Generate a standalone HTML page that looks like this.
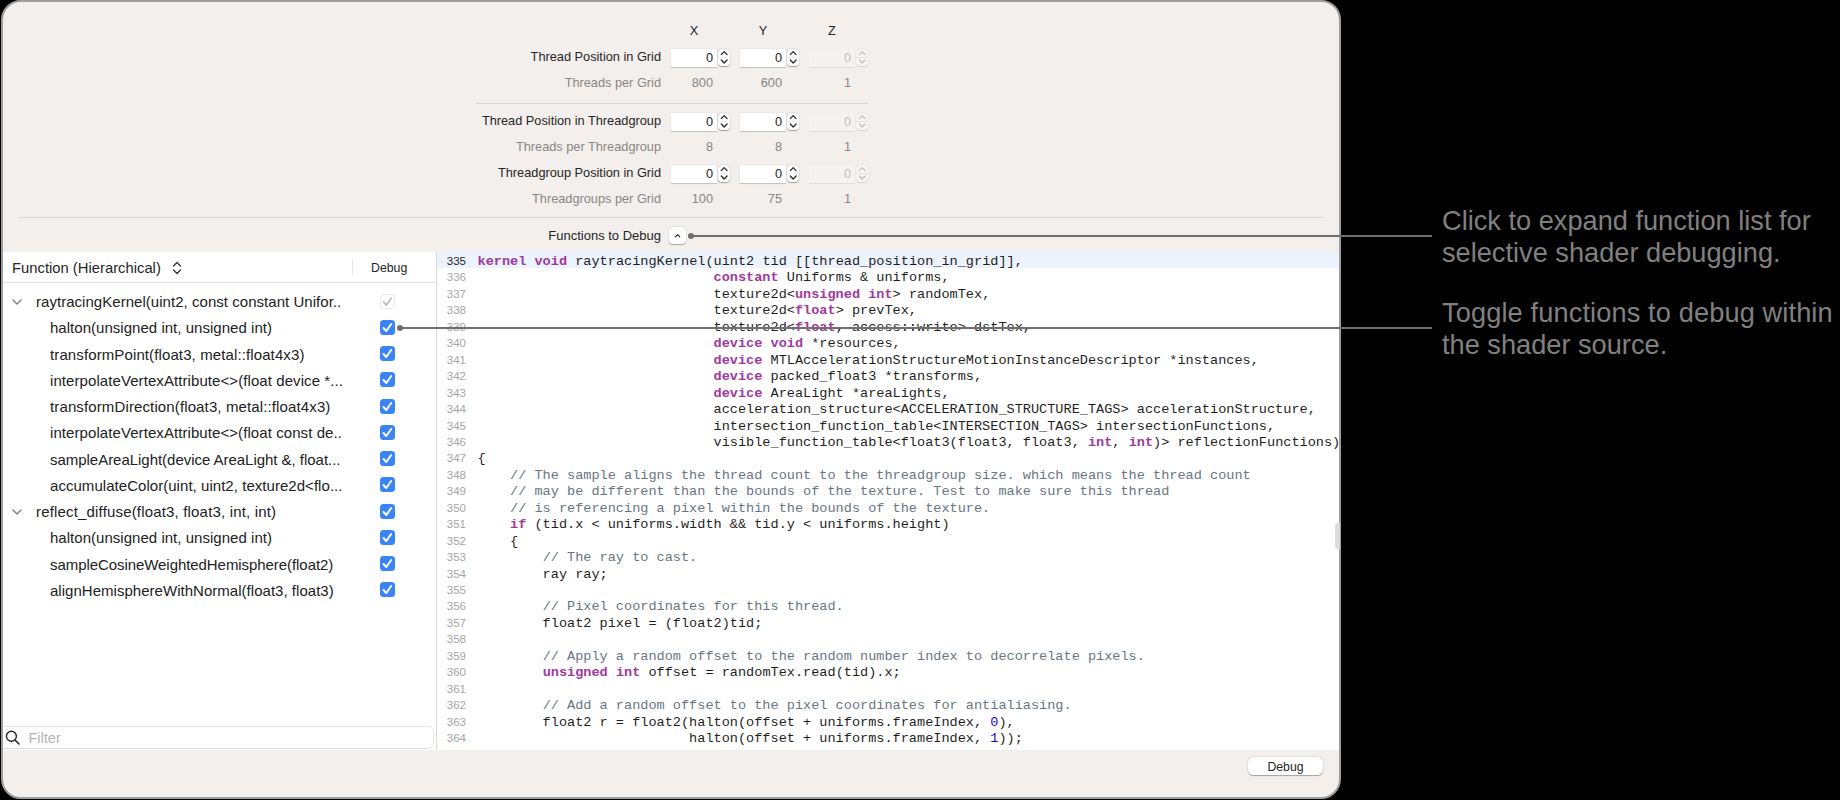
<!DOCTYPE html>
<html><head><meta charset="utf-8"><style>
html,body{margin:0;padding:0;}
body{width:1840px;height:800px;background:#000;position:relative;overflow:hidden;font-family:"Liberation Sans", sans-serif;}
.abs{position:absolute;}
.win{position:absolute;left:1px;top:0px;width:1340px;height:799px;box-sizing:border-box;border:2px solid #9d9d9d;border-radius:20px;background:#f3efec;}
.lbl{position:absolute;font-size:12.75px;color:#262626;white-space:nowrap;text-align:right;line-height:16px;}
.sub{color:#8a8684;}
.fld{position:absolute;width:46px;height:18px;background:#fff;box-shadow:0 0.6px 0.6px rgba(0,0,0,0.16),0 0 0 0.5px rgba(0,0,0,0.05);}
.fld span{position:absolute;right:4px;top:1px;font-size:12.75px;line-height:16px;color:#262626;}
.fld.dis{background:#f5f2f0;box-shadow:0 0.5px 0.5px rgba(0,0,0,0.08);}
.fld.dis span{color:#c4c0bd;}
.stp{position:absolute;width:12px;height:17px;background:#fff;border-radius:4px;box-shadow:0 0.5px 1px rgba(0,0,0,0.3),0 0 0 0.5px rgba(0,0,0,0.08);}
.stp.dis{background:#f7f4f2;box-shadow:0 0.5px 1px rgba(0,0,0,0.1),0 0 0 0.5px rgba(0,0,0,0.05);}
.val{position:absolute;font-size:12.75px;line-height:16px;color:#8a8684;text-align:right;width:60px;}
.row{position:absolute;font-size:15px;color:#222;white-space:nowrap;line-height:18px;}
.cb{position:absolute;left:380px;width:15px;height:15px;border-radius:3.5px;background:#3a84f6;}
.code{position:absolute;left:437px;font-family:"Liberation Mono", monospace;font-size:13.57px;white-space:pre;color:#1f1f1f;line-height:16.45px;height:16.45px;width:902px;}
.ln{position:absolute;left:0;top:-1px;width:29px;text-align:right;font-family:"Liberation Sans", sans-serif;font-size:11.5px;color:#a6a6a6;}
.ct{position:absolute;left:40.5px;}
.k{color:#a03a9e;font-weight:bold;}
.c{color:#687684;}
.n{color:#1c00cf;}
.ann{position:absolute;left:1442px;font-size:27.2px;line-height:32px;color:#808080;white-space:nowrap;}
</style></head><body>
<div class="win"></div>

<div class="abs" style="left:674px;top:23px;width:40px;text-align:center;font-size:12.75px;line-height:16px;color:#262626;">X</div>
<div class="abs" style="left:743px;top:23px;width:40px;text-align:center;font-size:12.75px;line-height:16px;color:#262626;">Y</div>
<div class="abs" style="left:812px;top:23px;width:40px;text-align:center;font-size:12.75px;line-height:16px;color:#262626;">Z</div>
<div class="lbl" style="right:1179px;top:49px;">Thread Position in Grid</div>
<div class="fld" style="left:671px;top:49px;"><span>0</span></div>
<div class="stp" style="left:718px;top:49px;"><svg width="12" height="17" style="position:absolute;left:0;top:0"><path d="M3.3 5.6 L6.2 2.6 L9.1 5.6 M3.3 11.0 L6.2 14.0 L9.1 11.0" stroke="#262626" stroke-width="1.25" fill="none" stroke-linecap="round" stroke-linejoin="round"/><line x1="0" y1="8.4" x2="12" y2="8.4" stroke="rgba(0,0,0,0.08)" stroke-width="1"/></svg></div>
<div class="fld" style="left:740px;top:49px;"><span>0</span></div>
<div class="stp" style="left:787px;top:49px;"><svg width="12" height="17" style="position:absolute;left:0;top:0"><path d="M3.3 5.6 L6.2 2.6 L9.1 5.6 M3.3 11.0 L6.2 14.0 L9.1 11.0" stroke="#262626" stroke-width="1.25" fill="none" stroke-linecap="round" stroke-linejoin="round"/><line x1="0" y1="8.4" x2="12" y2="8.4" stroke="rgba(0,0,0,0.08)" stroke-width="1"/></svg></div>
<div class="fld dis" style="left:809px;top:49px;"><span>0</span></div>
<div class="stp dis" style="left:856px;top:49px;"><svg width="12" height="17" style="position:absolute;left:0;top:0"><path d="M3.3 5.6 L6.2 2.6 L9.1 5.6 M3.3 11.0 L6.2 14.0 L9.1 11.0" stroke="#c4c0bd" stroke-width="1.25" fill="none" stroke-linecap="round" stroke-linejoin="round"/><line x1="0" y1="8.4" x2="12" y2="8.4" stroke="rgba(0,0,0,0.08)" stroke-width="1"/></svg></div>
<div class="lbl sub" style="right:1179px;top:75px;">Threads per Grid</div>
<div class="val" style="left:653px;top:75px;">800</div>
<div class="val" style="left:722px;top:75px;">600</div>
<div class="val" style="left:791px;top:75px;">1</div>
<div class="lbl" style="right:1179px;top:113px;">Thread Position in Threadgroup</div>
<div class="fld" style="left:671px;top:113px;"><span>0</span></div>
<div class="stp" style="left:718px;top:113px;"><svg width="12" height="17" style="position:absolute;left:0;top:0"><path d="M3.3 5.6 L6.2 2.6 L9.1 5.6 M3.3 11.0 L6.2 14.0 L9.1 11.0" stroke="#262626" stroke-width="1.25" fill="none" stroke-linecap="round" stroke-linejoin="round"/><line x1="0" y1="8.4" x2="12" y2="8.4" stroke="rgba(0,0,0,0.08)" stroke-width="1"/></svg></div>
<div class="fld" style="left:740px;top:113px;"><span>0</span></div>
<div class="stp" style="left:787px;top:113px;"><svg width="12" height="17" style="position:absolute;left:0;top:0"><path d="M3.3 5.6 L6.2 2.6 L9.1 5.6 M3.3 11.0 L6.2 14.0 L9.1 11.0" stroke="#262626" stroke-width="1.25" fill="none" stroke-linecap="round" stroke-linejoin="round"/><line x1="0" y1="8.4" x2="12" y2="8.4" stroke="rgba(0,0,0,0.08)" stroke-width="1"/></svg></div>
<div class="fld dis" style="left:809px;top:113px;"><span>0</span></div>
<div class="stp dis" style="left:856px;top:113px;"><svg width="12" height="17" style="position:absolute;left:0;top:0"><path d="M3.3 5.6 L6.2 2.6 L9.1 5.6 M3.3 11.0 L6.2 14.0 L9.1 11.0" stroke="#c4c0bd" stroke-width="1.25" fill="none" stroke-linecap="round" stroke-linejoin="round"/><line x1="0" y1="8.4" x2="12" y2="8.4" stroke="rgba(0,0,0,0.08)" stroke-width="1"/></svg></div>
<div class="lbl sub" style="right:1179px;top:139px;">Threads per Threadgroup</div>
<div class="val" style="left:653px;top:139px;">8</div>
<div class="val" style="left:722px;top:139px;">8</div>
<div class="val" style="left:791px;top:139px;">1</div>
<div class="lbl" style="right:1179px;top:165px;">Threadgroup Position in Grid</div>
<div class="fld" style="left:671px;top:165px;"><span>0</span></div>
<div class="stp" style="left:718px;top:165px;"><svg width="12" height="17" style="position:absolute;left:0;top:0"><path d="M3.3 5.6 L6.2 2.6 L9.1 5.6 M3.3 11.0 L6.2 14.0 L9.1 11.0" stroke="#262626" stroke-width="1.25" fill="none" stroke-linecap="round" stroke-linejoin="round"/><line x1="0" y1="8.4" x2="12" y2="8.4" stroke="rgba(0,0,0,0.08)" stroke-width="1"/></svg></div>
<div class="fld" style="left:740px;top:165px;"><span>0</span></div>
<div class="stp" style="left:787px;top:165px;"><svg width="12" height="17" style="position:absolute;left:0;top:0"><path d="M3.3 5.6 L6.2 2.6 L9.1 5.6 M3.3 11.0 L6.2 14.0 L9.1 11.0" stroke="#262626" stroke-width="1.25" fill="none" stroke-linecap="round" stroke-linejoin="round"/><line x1="0" y1="8.4" x2="12" y2="8.4" stroke="rgba(0,0,0,0.08)" stroke-width="1"/></svg></div>
<div class="fld dis" style="left:809px;top:165px;"><span>0</span></div>
<div class="stp dis" style="left:856px;top:165px;"><svg width="12" height="17" style="position:absolute;left:0;top:0"><path d="M3.3 5.6 L6.2 2.6 L9.1 5.6 M3.3 11.0 L6.2 14.0 L9.1 11.0" stroke="#c4c0bd" stroke-width="1.25" fill="none" stroke-linecap="round" stroke-linejoin="round"/><line x1="0" y1="8.4" x2="12" y2="8.4" stroke="rgba(0,0,0,0.08)" stroke-width="1"/></svg></div>
<div class="lbl sub" style="right:1179px;top:191px;">Threadgroups per Grid</div>
<div class="val" style="left:653px;top:191px;">100</div>
<div class="val" style="left:722px;top:191px;">75</div>
<div class="val" style="left:791px;top:191px;">1</div>
<div class="abs" style="left:476px;top:103px;width:392px;height:1px;background:#dcd7d4;"></div>
<div class="abs" style="left:19px;top:217px;width:1304px;height:1px;background:#dcd7d4;"></div>
<div class="lbl" style="right:1179px;top:228px;font-size:13px;">Functions to Debug</div>
<div class="abs" style="left:669px;top:227px;width:17px;height:17px;background:#fff;border-radius:4px;box-shadow:0 0.5px 1px rgba(0,0,0,0.3),0 0 0 0.5px rgba(0,0,0,0.06);"><svg width="17" height="17" style="position:absolute;left:0;top:0"><path d="M6.4 9.9 L8.6 7.6 L10.8 9.9" stroke="#222" stroke-width="1.2" fill="none" stroke-linecap="round" stroke-linejoin="round"/></svg></div>
<div class="abs" style="left:3px;top:252px;width:433px;height:498px;background:#fff;"></div>
<div class="abs" style="left:436px;top:252px;width:1px;height:498px;background:#ddd7d5;"></div>
<div class="abs" style="left:12px;top:258px;font-size:14.8px;line-height:20px;color:#262626;white-space:nowrap;">Function (Hierarchical)</div>
<svg class="abs" style="left:170px;top:258.5px" width="14" height="18"><path d="M3.5 7 L7 3.5 L10.5 7 M3.5 11 L7 14.5 L10.5 11" stroke="#333" stroke-width="1.3" fill="none" stroke-linecap="round" stroke-linejoin="round"/></svg>
<div class="abs" style="left:352px;top:259px;width:1px;height:16px;background:#e4e4e4;"></div>
<div class="abs" style="left:371px;top:260px;font-size:12.3px;line-height:16px;color:#262626;">Debug</div>
<div class="abs" style="left:3px;top:282px;width:433px;height:1px;background:#e2e2e2;"></div>
<div class="row" style="left:36px;top:293.00px;letter-spacing:0.038px;">raytracingKernel(uint2, const constant Unifor..</div>
<svg class="abs" style="left:11px;top:298.00px" width="12" height="8"><path d="M2 2 L6 6 L10 2" stroke="#7a7a7a" stroke-width="1.3" fill="none" stroke-linecap="round" stroke-linejoin="round"/></svg>
<div class="abs" style="left:380px;top:293.50px;width:15px;height:15px;box-sizing:border-box;border-radius:3.5px;background:#fff;border:1px solid #e6e6e6;"><svg width="13" height="13" style="position:absolute;left:0;top:0"><path d="M2.6 7.0 L5.4 10.0 L10.2 3.3" stroke="#bdbdbd" stroke-width="1.9" fill="none" stroke-linecap="round" stroke-linejoin="round"/></svg></div>
<div class="row" style="left:50px;top:319.25px;letter-spacing:0.029px;">halton(unsigned int, unsigned int)</div>
<div class="cb" style="top:319.75px;"><svg width="15" height="15" style="position:absolute;left:0;top:0"><path d="M3.5 8.0 L6.3 11.0 L11.2 4.0" stroke="#fff" stroke-width="2.0" fill="none" stroke-linecap="round" stroke-linejoin="round"/></svg></div>
<div class="row" style="left:50px;top:345.50px;letter-spacing:0.113px;">transformPoint(float3, metal::float4x3)</div>
<div class="cb" style="top:346.00px;"><svg width="15" height="15" style="position:absolute;left:0;top:0"><path d="M3.5 8.0 L6.3 11.0 L11.2 4.0" stroke="#fff" stroke-width="2.0" fill="none" stroke-linecap="round" stroke-linejoin="round"/></svg></div>
<div class="row" style="left:50px;top:371.75px;letter-spacing:0.079px;">interpolateVertexAttribute&lt;&gt;(float device *...</div>
<div class="cb" style="top:372.25px;"><svg width="15" height="15" style="position:absolute;left:0;top:0"><path d="M3.5 8.0 L6.3 11.0 L11.2 4.0" stroke="#fff" stroke-width="2.0" fill="none" stroke-linecap="round" stroke-linejoin="round"/></svg></div>
<div class="row" style="left:50px;top:398.00px;letter-spacing:0.125px;">transformDirection(float3, metal::float4x3)</div>
<div class="cb" style="top:398.50px;"><svg width="15" height="15" style="position:absolute;left:0;top:0"><path d="M3.5 8.0 L6.3 11.0 L11.2 4.0" stroke="#fff" stroke-width="2.0" fill="none" stroke-linecap="round" stroke-linejoin="round"/></svg></div>
<div class="row" style="left:50px;top:424.25px;letter-spacing:0.077px;">interpolateVertexAttribute&lt;&gt;(float const de..</div>
<div class="cb" style="top:424.75px;"><svg width="15" height="15" style="position:absolute;left:0;top:0"><path d="M3.5 8.0 L6.3 11.0 L11.2 4.0" stroke="#fff" stroke-width="2.0" fill="none" stroke-linecap="round" stroke-linejoin="round"/></svg></div>
<div class="row" style="left:50px;top:450.50px;letter-spacing:-0.031px;">sampleAreaLight(device AreaLight &amp;, float...</div>
<div class="cb" style="top:451.00px;"><svg width="15" height="15" style="position:absolute;left:0;top:0"><path d="M3.5 8.0 L6.3 11.0 L11.2 4.0" stroke="#fff" stroke-width="2.0" fill="none" stroke-linecap="round" stroke-linejoin="round"/></svg></div>
<div class="row" style="left:50px;top:476.75px;letter-spacing:0.043px;">accumulateColor(uint, uint2, texture2d&lt;flo...</div>
<div class="cb" style="top:477.25px;"><svg width="15" height="15" style="position:absolute;left:0;top:0"><path d="M3.5 8.0 L6.3 11.0 L11.2 4.0" stroke="#fff" stroke-width="2.0" fill="none" stroke-linecap="round" stroke-linejoin="round"/></svg></div>
<div class="row" style="left:36px;top:503.00px;letter-spacing:0.172px;">reflect_diffuse(float3, float3, int, int)</div>
<svg class="abs" style="left:11px;top:508.00px" width="12" height="8"><path d="M2 2 L6 6 L10 2" stroke="#7a7a7a" stroke-width="1.3" fill="none" stroke-linecap="round" stroke-linejoin="round"/></svg>
<div class="cb" style="top:503.50px;"><svg width="15" height="15" style="position:absolute;left:0;top:0"><path d="M3.5 8.0 L6.3 11.0 L11.2 4.0" stroke="#fff" stroke-width="2.0" fill="none" stroke-linecap="round" stroke-linejoin="round"/></svg></div>
<div class="row" style="left:50px;top:529.25px;letter-spacing:0.029px;">halton(unsigned int, unsigned int)</div>
<div class="cb" style="top:529.75px;"><svg width="15" height="15" style="position:absolute;left:0;top:0"><path d="M3.5 8.0 L6.3 11.0 L11.2 4.0" stroke="#fff" stroke-width="2.0" fill="none" stroke-linecap="round" stroke-linejoin="round"/></svg></div>
<div class="row" style="left:50px;top:555.50px;letter-spacing:-0.065px;">sampleCosineWeightedHemisphere(float2)</div>
<div class="cb" style="top:556.00px;"><svg width="15" height="15" style="position:absolute;left:0;top:0"><path d="M3.5 8.0 L6.3 11.0 L11.2 4.0" stroke="#fff" stroke-width="2.0" fill="none" stroke-linecap="round" stroke-linejoin="round"/></svg></div>
<div class="row" style="left:50px;top:581.75px;letter-spacing:0.027px;">alignHemisphereWithNormal(float3, float3)</div>
<div class="cb" style="top:582.25px;"><svg width="15" height="15" style="position:absolute;left:0;top:0"><path d="M3.5 8.0 L6.3 11.0 L11.2 4.0" stroke="#fff" stroke-width="2.0" fill="none" stroke-linecap="round" stroke-linejoin="round"/></svg></div>
<div class="abs" style="left:3px;top:726px;width:431px;height:23px;box-sizing:border-box;border-top:1px solid #e3e6e8;border-bottom:1px solid #dde1e3;border-right:1px solid #e8e8e8;border-radius:0 6px 6px 0;background:#fff;"></div>
<svg class="abs" style="left:4px;top:729px" width="18" height="18"><circle cx="7.4" cy="7.3" r="5" stroke="#262626" stroke-width="1.4" fill="none"/><path d="M11 11 L15 15" stroke="#262626" stroke-width="1.6" stroke-linecap="round"/></svg>
<div class="abs" style="left:28.5px;top:729px;font-size:14.5px;line-height:18px;color:#b3b3b3;">Filter</div>
<div class="abs" style="left:437px;top:252px;width:902px;height:498px;background:#fff;"></div>
<div class="abs" style="left:437px;top:252px;width:902px;height:16px;background:#ecf3fd;"></div>
<div class="abs" style="left:437px;top:252px;width:902px;height:498px;overflow:hidden;">
<div class="code" style="left:0;top:2.00px;"><span class="ln" style="color:#262626">335</span><span class="ct"><span class="k">kernel</span> <span class="k">void</span> raytracingKernel(uint2 tid [[thread_position_in_grid]],</span></div>
<div class="code" style="left:0;top:18.45px;"><span class="ln" style="color:#a6a6a6">336</span><span class="ct">                             <span class="k">constant</span> Uniforms &amp; uniforms,</span></div>
<div class="code" style="left:0;top:34.90px;"><span class="ln" style="color:#a6a6a6">337</span><span class="ct">                             texture2d&lt;<span class="k">unsigned</span> <span class="k">int</span>&gt; randomTex,</span></div>
<div class="code" style="left:0;top:51.35px;"><span class="ln" style="color:#a6a6a6">338</span><span class="ct">                             texture2d&lt;<span class="k">float</span>&gt; prevTex,</span></div>
<div class="code" style="left:0;top:67.80px;"><span class="ln" style="color:#a6a6a6">339</span><span class="ct">                             texture2d&lt;<span class="k">float</span>, access::write&gt; dstTex,</span></div>
<div class="code" style="left:0;top:84.25px;"><span class="ln" style="color:#a6a6a6">340</span><span class="ct">                             <span class="k">device</span> <span class="k">void</span> *resources,</span></div>
<div class="code" style="left:0;top:100.70px;"><span class="ln" style="color:#a6a6a6">341</span><span class="ct">                             <span class="k">device</span> MTLAccelerationStructureMotionInstanceDescriptor *instances,</span></div>
<div class="code" style="left:0;top:117.15px;"><span class="ln" style="color:#a6a6a6">342</span><span class="ct">                             <span class="k">device</span> packed_float3 *transforms,</span></div>
<div class="code" style="left:0;top:133.60px;"><span class="ln" style="color:#a6a6a6">343</span><span class="ct">                             <span class="k">device</span> AreaLight *areaLights,</span></div>
<div class="code" style="left:0;top:150.05px;"><span class="ln" style="color:#a6a6a6">344</span><span class="ct">                             acceleration_structure&lt;ACCELERATION_STRUCTURE_TAGS&gt; accelerationStructure,</span></div>
<div class="code" style="left:0;top:166.50px;"><span class="ln" style="color:#a6a6a6">345</span><span class="ct">                             intersection_function_table&lt;INTERSECTION_TAGS&gt; intersectionFunctions,</span></div>
<div class="code" style="left:0;top:182.95px;"><span class="ln" style="color:#a6a6a6">346</span><span class="ct">                             visible_function_table&lt;float3(float3, float3, <span class="k">int</span>, <span class="k">int</span>)&gt; reflectionFunctions)</span></div>
<div class="code" style="left:0;top:199.40px;"><span class="ln" style="color:#a6a6a6">347</span><span class="ct">{</span></div>
<div class="code" style="left:0;top:215.85px;"><span class="ln" style="color:#a6a6a6">348</span><span class="ct">    <span class="c">// The sample aligns the thread count to the threadgroup size. which means the thread count</span></span></div>
<div class="code" style="left:0;top:232.30px;"><span class="ln" style="color:#a6a6a6">349</span><span class="ct">    <span class="c">// may be different than the bounds of the texture. Test to make sure this thread</span></span></div>
<div class="code" style="left:0;top:248.75px;"><span class="ln" style="color:#a6a6a6">350</span><span class="ct">    <span class="c">// is referencing a pixel within the bounds of the texture.</span></span></div>
<div class="code" style="left:0;top:265.20px;"><span class="ln" style="color:#a6a6a6">351</span><span class="ct">    <span class="k">if</span> (tid.x &lt; uniforms.width &amp;&amp; tid.y &lt; uniforms.height)</span></div>
<div class="code" style="left:0;top:281.65px;"><span class="ln" style="color:#a6a6a6">352</span><span class="ct">    {</span></div>
<div class="code" style="left:0;top:298.10px;"><span class="ln" style="color:#a6a6a6">353</span><span class="ct">        <span class="c">// The ray to cast.</span></span></div>
<div class="code" style="left:0;top:314.55px;"><span class="ln" style="color:#a6a6a6">354</span><span class="ct">        ray ray;</span></div>
<div class="code" style="left:0;top:331.00px;"><span class="ln" style="color:#a6a6a6">355</span><span class="ct"></span></div>
<div class="code" style="left:0;top:347.45px;"><span class="ln" style="color:#a6a6a6">356</span><span class="ct">        <span class="c">// Pixel coordinates for this thread.</span></span></div>
<div class="code" style="left:0;top:363.90px;"><span class="ln" style="color:#a6a6a6">357</span><span class="ct">        float2 pixel = (float2)tid;</span></div>
<div class="code" style="left:0;top:380.35px;"><span class="ln" style="color:#a6a6a6">358</span><span class="ct"></span></div>
<div class="code" style="left:0;top:396.80px;"><span class="ln" style="color:#a6a6a6">359</span><span class="ct">        <span class="c">// Apply a random offset to the random number index to decorrelate pixels.</span></span></div>
<div class="code" style="left:0;top:413.25px;"><span class="ln" style="color:#a6a6a6">360</span><span class="ct">        <span class="k">unsigned</span> <span class="k">int</span> offset = randomTex.read(tid).x;</span></div>
<div class="code" style="left:0;top:429.70px;"><span class="ln" style="color:#a6a6a6">361</span><span class="ct"></span></div>
<div class="code" style="left:0;top:446.15px;"><span class="ln" style="color:#a6a6a6">362</span><span class="ct">        <span class="c">// Add a random offset to the pixel coordinates for antialiasing.</span></span></div>
<div class="code" style="left:0;top:462.60px;"><span class="ln" style="color:#a6a6a6">363</span><span class="ct">        float2 r = float2(halton(offset + uniforms.frameIndex, <span class="n">0</span>),</span></div>
<div class="code" style="left:0;top:479.05px;"><span class="ln" style="color:#a6a6a6">364</span><span class="ct">                          halton(offset + uniforms.frameIndex, <span class="n">1</span>));</span></div>
</div>
<div class="abs" style="left:1335px;top:523px;width:5px;height:26px;border-radius:3px 0 0 3px;background:#dcdcdc;"></div>
<div class="abs" style="left:1248px;top:757px;width:75px;height:18px;background:#fff;border-radius:5px;box-shadow:0 0.5px 1px rgba(0,0,0,0.3),0 0 0 0.5px rgba(0,0,0,0.08);"></div>
<div class="abs" style="left:1248px;top:759px;width:75px;text-align:center;font-size:12.3px;line-height:16px;color:#262626;">Debug</div>
<div class="abs" style="left:690px;top:235px;width:742px;height:2px;background:#6f6f6f;"></div>
<div class="abs" style="left:687.7px;top:232.9px;width:6px;height:6px;border-radius:3px;background:#6f6f6f;"></div>
<div class="abs" style="left:400px;top:327px;width:1032px;height:2px;background:#6f6f6f;"></div>
<div class="abs" style="left:397px;top:325px;width:6px;height:6px;border-radius:3px;background:#6f6f6f;"></div>
<div class="ann" style="top:205px;">Click to expand function list for<br>selective shader debugging.</div>
<div class="ann" style="top:297px;"><span style="letter-spacing:0.12px">Toggle functions to debug within</span><br>the shader source.</div>
</body></html>
